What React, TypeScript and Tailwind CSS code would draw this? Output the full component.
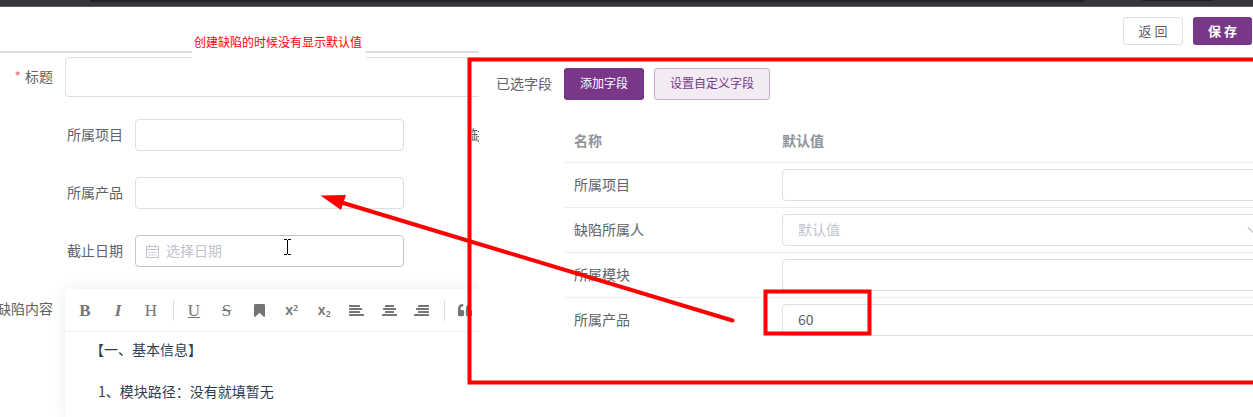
import React from "react";
import { FaQuoteLeft } from "react-icons/fa";

const inputBase =
  "block w-full rounded border border-[#dcdfe6] bg-white px-[15px] pb-0.5 text-sm text-[#606266] outline-none placeholder:text-[#c0c4cc] placeholder:opacity-100";

function CalendarIcon() {
  return (
    <svg className="h-[14px] w-[14px]" viewBox="0 0 14 14" fill="none" stroke="#c0c4cc" aria-hidden="true">
      <rect x="1.500" y="2.500" width="12" height="11" />
      <path d="M1.500 5.500h12M4.500 0.500v3M10.500 0.500v3" />
      <path d="M3.500 8.500h2M6.500 8.500h2M9.500 8.500h2M3.500 11h2M6.500 11h2M9.500 11h2" />
    </svg>
  );
}

function AlignIcon({ rows }: { rows: [number, number][] }) {
  return (
    <svg className="h-[13px] w-[15px]" viewBox="0 0 15 13" fill="currentColor" aria-hidden="true">
      {rows.map(([x, w], i) => (
        <rect key={i} x={x} y={i * 3 + 1} width={w} height="2" rx="0.5" />
      ))}
    </svg>
  );
}

function Tool({ label, children }: { label: string; children: React.ReactNode }) {
  return (
    <button
      type="button"
      aria-label={label}
      className="flex h-8 w-8 items-center justify-center font-['Liberation_Serif',serif] text-[17px] leading-none font-medium text-[#757575]"
    >
      {children}
    </button>
  );
}

function FormRow({ id, label, children }: { id: string; label: string; children: React.ReactNode }) {
  return (
    <div className="flex h-8 items-center">
      <label htmlFor={id} className="w-[123px] shrink-0 pb-0.5 text-right text-sm">
        {label}
      </label>
      <div className="relative ml-3 w-[269px] shrink-0">{children}</div>
    </div>
  );
}

function DefectForm() {
  return (
    <form className="flex w-[479px] shrink-0 flex-col overflow-hidden text-[#606266]">
      <div className="h-11 shrink-0" />
      <div className="h-0.5 shrink-0 bg-[#dedede]" />
      <div className="mt-1 flex items-center">
        <label htmlFor="title" className="w-[53px] shrink-0 pb-0.5 text-right text-sm">
          <span className="mr-1 text-[#f56c6c]">*</span>标题
        </label>
        <div className="ml-3 w-[640px] shrink-0">
          <input id="title" className={`${inputBase} h-10`} />
        </div>
      </div>

      <div className="mt-[22px] flex flex-col gap-[26px]">
        <div className="flex items-center">
          <FormRow id="project" label="所属项目">
            <input id="project" className={`${inputBase} h-8`} />
          </FormRow>
          <span className="ml-[67px] w-2 shrink-0 overflow-hidden pb-0.5 text-sm">缺</span>
        </div>
        <FormRow id="product" label="所属产品">
          <input id="product" className={`${inputBase} h-8`} />
        </FormRow>
        <FormRow id="deadline" label="截止日期">
          <input
            id="deadline"
            placeholder="选择日期"
            className="block h-8 w-full rounded border border-[#c0c4cc] bg-white pr-[15px] pb-0.5 pl-[30px] text-sm text-[#606266] outline-none placeholder:text-[#c0c4cc] placeholder:opacity-100"
          />
          <span className="pointer-events-none absolute inset-y-0 left-[10px] flex items-center">
            <CalendarIcon />
          </span>
        </FormRow>
      </div>

      <div className="mt-[22px] flex flex-1">
        <div className="flex h-10 w-[53px] shrink-0 items-center justify-end pb-0.5 text-sm whitespace-nowrap">缺陷内容</div>
        <div className="ml-3 w-[640px] shrink-0 rounded-t bg-white shadow-[0_0_14px_rgba(0,0,0,0.08)]">
          <div className="flex h-[43px] items-center border-b border-[#f0f0f0] pl-1">
            <div className="flex w-[98px] shrink-0 justify-between">
              <Tool label="粗体"><b>B</b></Tool>
              <Tool label="斜体"><b><i>I</i></b></Tool>
              <Tool label="标题">H</Tool>
            </div>
            <span className="mr-1 ml-1.5 h-[21px] w-px bg-[#dddddd]" />
            <div className="flex w-[260px] shrink-0 justify-between">
              <Tool label="下划线"><u>U</u></Tool>
              <Tool label="删除线"><s>S</s></Tool>
              <Tool label="标记">
                <svg className="h-[13px] w-[11px]" viewBox="0 0 11 13" fill="currentColor" aria-hidden="true">
                  <path d="M1.200 0h8.600q1.200 0 1.200 1.200v11q-.5 1.300-1.600.3L5.500 8.800 1.600 12.500Q.5 13.500 0 12.200v-11Q0 0 1.200 0z" />
                </svg>
              </Tool>
              <Tool label="上角标">
                <span className="font-['Noto_Sans',sans-serif] text-sm font-semibold">x<sup className="text-[9px]">2</sup></span>
              </Tool>
              <Tool label="下角标">
                <span className="font-['Noto_Sans',sans-serif] text-sm font-semibold">x<sub className="text-[9px]">2</sub></span>
              </Tool>
              <Tool label="左对齐"><AlignIcon rows={[[0, 11], [0, 13], [0, 11], [0, 15]]} /></Tool>
              <Tool label="居中"><AlignIcon rows={[[3, 9], [1, 13], [3, 9], [0, 15]]} /></Tool>
              <Tool label="右对齐"><AlignIcon rows={[[4, 11], [2, 13], [4, 11], [0, 15]]} /></Tool>
            </div>
            <span className="mr-1 ml-1.5 h-[21px] w-px bg-[#dddddd]" />
            <Tool label="引用"><FaQuoteLeft className="h-[14px] w-[14px]" /></Tool>
          </div>
          <div className="pt-1.5 pl-[25px] text-sm leading-[22px] text-[#2c3e50]">
            <p>【一、基本信息】</p>
            <p className="mt-5 pl-2">1、模块路径：没有就填暂无</p>
          </div>
        </div>
      </div>
    </form>
  );
}

const fields = [
  { id: "f-project", name: "所属项目", kind: "input", value: "" },
  { id: "f-owner", name: "缺陷所属人", kind: "select", value: "" },
  { id: "f-module", name: "所属模块", kind: "input", value: "" },
  { id: "f-product", name: "所属产品", kind: "input", value: "60" },
];

function TemplateSettings() {
  return (
    <section className="min-w-0 flex-1 overflow-hidden bg-white text-[#606266]">
      <div className="flex justify-end gap-[10px] pt-[10px] pr-px">
        <button type="button" className="h-7 w-[60px] rounded-[3px] border border-[#dcdfe6] bg-white pb-0.5 text-[13px] leading-none text-[#606266]">
          返 回
        </button>
        <button type="button" className="h-7 w-[59px] rounded-[3px] bg-[#783887] pb-0.5 text-[13px] leading-none font-bold text-white">
          保 存
        </button>
      </div>

      <div className="mt-[23px] flex items-center pl-[17px] text-sm">
        <span className="w-14 pb-0.5 whitespace-nowrap">已选字段</span>
        <button type="button" className="ml-3 h-8 w-20 rounded-[3px] bg-[#783887] pb-0.5 text-xs text-white">
          添加字段
        </button>
        <button type="button" className="ml-[10px] h-8 w-[116px] rounded-[3px] border border-[#c9afcf] bg-[#f2ebf3] pb-0.5 text-xs text-[#783887]">
          设置自定义字段
        </button>
      </div>

      <div className="mt-[19px] -mr-4 pl-[85px]">
        <table className="w-full table-fixed border-separate border-spacing-0 text-left text-sm">
          <colgroup>
            <col className="w-[208px]" />
            <col />
          </colgroup>
          <thead>
            <tr className="h-11 text-[#909399]">
              <th className="border-b border-[#ebeef5] px-[10px] pb-0.5 font-bold">名称</th>
              <th className="border-b border-[#ebeef5] px-[10px] pb-0.5 font-bold">默认值</th>
            </tr>
          </thead>
          <tbody className="[&>tr:last-child>td]:border-transparent">
            {fields.map((f) => (
              <tr key={f.id}>
                <td className="border-b border-[#ebeef5] px-[10px] pb-0.5">
                  <label htmlFor={f.id}>{f.name}</label>
                </td>
                <td className="border-b border-[#ebeef5] py-[6px] pl-[10px]">
                  {f.kind === "select" ? (
                    <div className="relative">
                      <select
                        id={f.id}
                        className="block h-8 w-full appearance-none rounded border border-[#dcdfe6] bg-white pb-0.5 pl-[15px] text-sm text-[#c0c4cc] outline-none"
                      >
                        <option>默认值</option>
                      </select>
                      <svg className="pointer-events-none absolute top-[10px] right-[10px] h-3 w-3" viewBox="0 0 12 12" fill="none" stroke="#c0c4cc" strokeWidth="1.2" aria-hidden="true">
                        <path d="M1 3.500 6 8.500l5-5" />
                      </svg>
                    </div>
                  ) : (
                    <input id={f.id} defaultValue={f.value} className={`${inputBase} h-8`} />
                  )}
                </td>
              </tr>
            ))}
          </tbody>
        </table>
      </div>
    </section>
  );
}

/* Red review marks and the pointer, laid over both panels. */
function Annotations() {
  return (
    <>
      <p className="absolute top-[30px] left-[192px] h-7 w-[174px] bg-white pl-0.5 text-xs leading-[23px] whitespace-nowrap text-[#ff0000]">
        创建缺陷的时候没有显示默认值
      </p>
      <svg className="pointer-events-none absolute inset-0 h-full w-full" fill="none" stroke="#ff0000" strokeWidth="4" aria-hidden="true">
        <path d="M4000 59.500H469.500V382.500H4000" />
        <rect x="765.500" y="291.500" width="104" height="42" />
        <path d="M732.500 320.500 340 202" strokeLinecap="round" />
        <path d="M320.500 195.500 346 195 341 210z" fill="#ff0000" stroke="none" />
        <path d="M284 239.500h3M288 239.500h3M287.500 240v14M284 254.500h3M288 254.500h3" stroke="#000" strokeWidth="1" />
      </svg>
    </>
  );
}

export default function App() {
  return (
    <div className="relative flex min-h-screen flex-col overflow-hidden bg-white font-['Noto_Sans_CJK_SC',sans-serif]">
      <div className="flex h-[7px] shrink-0 items-start border-b border-[#5f6064] bg-[#35363a] pl-[90px]">
        <div className="h-0.5 w-[995px] rounded-b bg-[#202124]" />
        <div className="ml-[57px] h-px w-[71px] rounded-b bg-[#202124]" />
      </div>
      <main className="flex flex-1">
        <DefectForm />
        <TemplateSettings />
      </main>
      <Annotations />
    </div>
  );
}
